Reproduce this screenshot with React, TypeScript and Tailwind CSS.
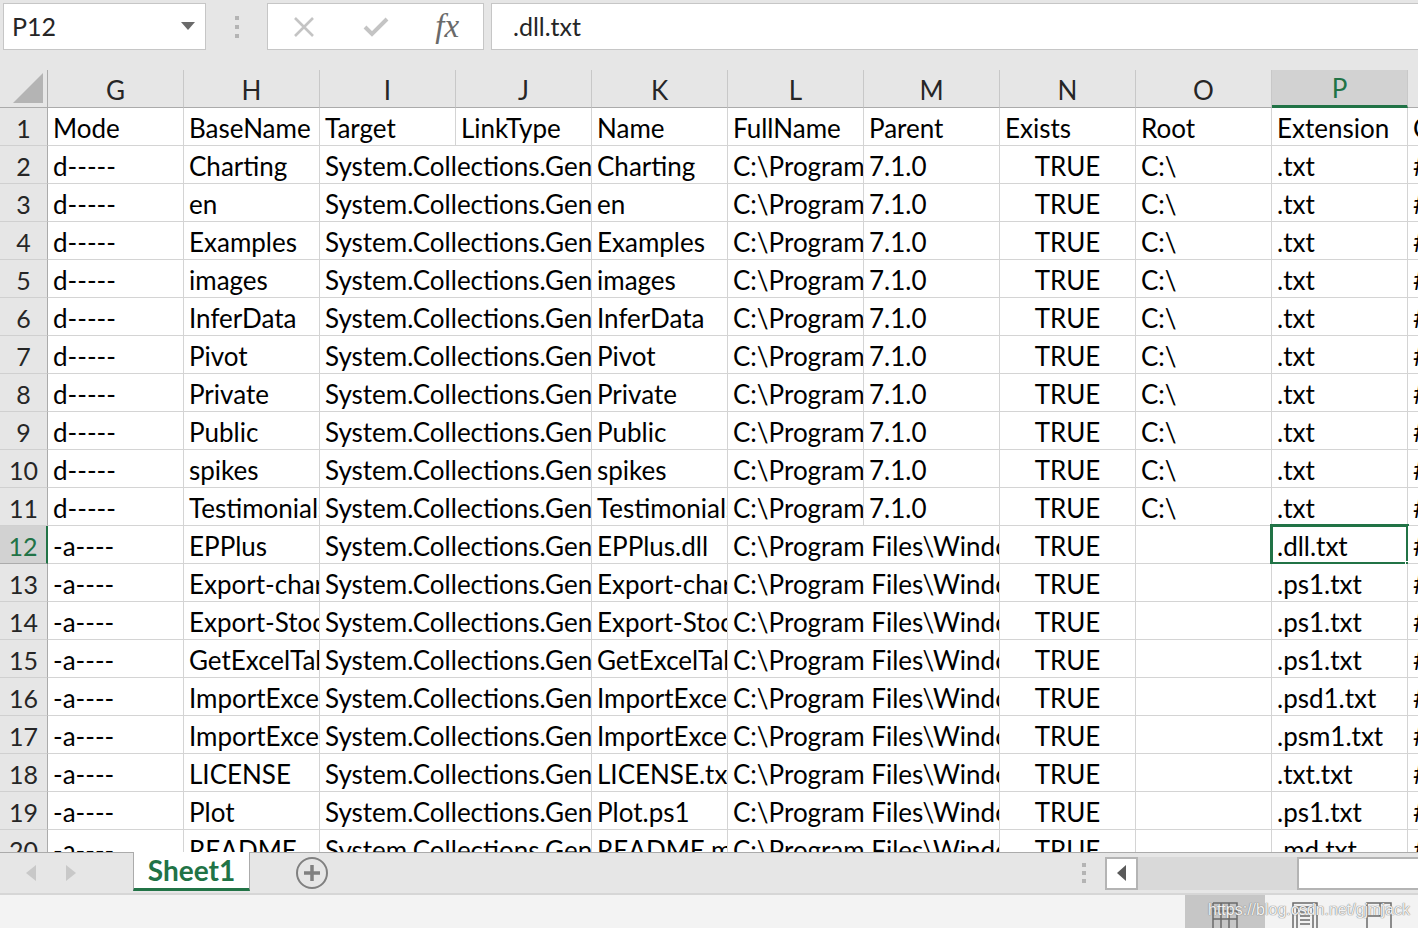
import React from 'react';

type Cell = { t?: string; c?: boolean; span?: number };

const GEN = 'System.Collections.Generic.List`1[System.String]';
const BASE = 'C:\\Program Files\\WindowsPowerShell\\Modules\\ImportExcel\\7.1.0\\';

const dirs = ['Charting', 'en', 'Examples', 'images', 'InferData', 'Pivot', 'Private', 'Public', 'spikes', 'Testimonials'];
const files: [string, string, string][] = [
  ['EPPlus', 'EPPlus.dll', '.dll.txt'],
  ['Export-charts', 'Export-charts.ps1', '.ps1.txt'],
  ['Export-StocksToExcel', 'Export-StocksToExcel.ps1', '.ps1.txt'],
  ['GetExcelTable', 'GetExcelTable.ps1', '.ps1.txt'],
  ['ImportExcel', 'ImportExcel.psd1', '.psd1.txt'],
  ['ImportExcel', 'ImportExcel.psm1', '.psm1.txt'],
  ['LICENSE', 'LICENSE.txt', '.txt.txt'],
  ['Plot', 'Plot.ps1', '.ps1.txt'],
  ['README', 'README.md', '.md.txt'],
];

const rows: Cell[][] = [
  [
    { t: 'Mode' }, { t: 'BaseName' }, { t: 'Target' }, { t: 'LinkType' }, { t: 'Name' },
    { t: 'FullName' }, { t: 'Parent' }, { t: 'Exists' }, { t: 'Root' }, { t: 'Extension' }, { t: 'CreationTime' },
  ],
  ...dirs.map((d) => [
    { t: 'd-----' }, { t: d }, { t: GEN, span: 2 }, { t: d },
    { t: BASE + d }, { t: '7.1.0' }, { t: 'TRUE', c: true }, { t: 'C:\\' }, { t: '.txt' }, { t: '########' },
  ]),
  ...files.map(([b, n, e]) => [
    { t: '-a----' }, { t: b }, { t: GEN, span: 2 }, { t: n },
    { t: BASE + n, span: 2 }, { t: 'TRUE', c: true }, { t: '' }, { t: e }, { t: '########' },
  ]),
];

const COLS = ['G', 'H', 'I', 'J', 'K', 'L', 'M', 'N', 'O', 'P', 'Q'];
const FONT = "font-['Lato',sans-serif]";

function GridRow({ n, cells }: { n: number; cells: Cell[] }) {
  const sel = n === 12;
  let colIdx = 0;
  return (
    <div className="flex h-[38px] shrink-0">
      <div
        className={`w-[48px] shrink-0 flex items-end justify-center pb-[4px] text-[25px] leading-none border-b ${
          sel
            ? 'bg-[#d2d2d2] text-[#217346] border-r-2 border-r-[#217346] border-b-[#ababab]'
            : 'bg-[#e6e6e6] text-[#262626] border-r border-r-[#ababab] border-b-[#d0d0d0]'
        }`}
      >
        {n}
      </div>
      {cells.map((cell, i) => {
        const col = COLS[colIdx];
        colIdx += cell.span ?? 1;
        const isSel = sel && col === 'P';
        return (
          <div
            key={i}
            className={`relative h-full shrink-0 border-r border-b border-[#d4d4d4] bg-white ${
              cell.span === 2 ? 'w-[272px]' : 'w-[136px]'
            }`}
          >
            <div
              className={`h-full overflow-hidden whitespace-nowrap flex items-end pb-[4px] px-[5px] text-[26px] leading-none text-black ${
                cell.c ? 'justify-center' : 'justify-start'
              }`}
            >
              {cell.t}
            </div>
            {isSel && (
              <>
                <div className="absolute left-[-2px] top-[-2px] right-[-2px] bottom-[-2px] border-[3px] border-[#217346]" />
                <div className="absolute right-[-6px] bottom-[-6px] w-[8px] h-[8px] bg-[#217346] border border-white" />
              </>
            )}
          </div>
        );
      })}
    </div>
  );
}

export default function App() {
  return (
    <div className={`w-[1418px] h-[928px] overflow-hidden flex flex-col bg-[#e6e6e6] ${FONT}`}>
      {/* Formula bar */}
      <div className="h-[70px] shrink-0 flex items-start pt-[3px] pl-[3px] bg-[#e6e6e6]">
        <div className="w-[203px] h-[47px] bg-white border border-[#c6c6c6] flex items-center justify-between pl-[8px] pr-[10px]">
          <span className="text-[25px] text-[#262626] leading-none">P12</span>
          <svg width="14" height="9" viewBox="0 0 14 9">
            <path d="M0 0 L14 0 L7 8 Z" fill="#6a6a6a" />
          </svg>
        </div>
        <div className="w-[61px] h-[47px] flex flex-col items-center justify-center gap-[5px]">
          <div className="w-[4px] h-[4px] bg-[#b4b4b4]" />
          <div className="w-[4px] h-[4px] bg-[#b4b4b4]" />
          <div className="w-[4px] h-[4px] bg-[#b4b4b4]" />
        </div>
        <div className="w-[217px] h-[47px] bg-white border border-[#c6c6c6] flex items-center">
          <div className="w-[72px] flex justify-center">
            <svg width="22" height="22" viewBox="0 0 22 22">
              <path d="M2 2 L20 20 M20 2 L2 20" stroke="#c4c4c4" strokeWidth="2.6" />
            </svg>
          </div>
          <div className="w-[72px] flex justify-center">
            <svg width="26" height="22" viewBox="0 0 26 22">
              <path d="M2 11 L9 18 L24 3" stroke="#c4c4c4" strokeWidth="4" fill="none" />
            </svg>
          </div>
          <div className="w-[72px] flex justify-center">
            <span className="font-['Liberation_Serif',serif] italic text-[33px] leading-none text-[#6a6a6a]">fx</span>
          </div>
        </div>
        <div className="ml-[7px] flex-1 h-[47px] bg-white border border-[#c6c6c6] border-r-0 flex items-center pl-[21px]">
          <span className="text-[25px] text-[#262626] leading-none">.dll.txt</span>
        </div>
      </div>

      {/* Grid */}
      <div className="h-[782px] shrink-0 overflow-hidden flex flex-col">
        {/* column header */}
        <div className="flex h-[38px] shrink-0 bg-[#e6e6e6]">
          <div className="w-[48px] shrink-0 border-r border-b border-[#ababab] flex items-end justify-end p-[4px]">
            <svg width="30" height="30" viewBox="0 0 30 30">
              <path d="M30 0 L30 30 L0 30 Z" fill="#b4b4b4" />
            </svg>
          </div>
          {COLS.map((c) => (
            <div
              key={c}
              className={`w-[136px] shrink-0 flex items-end justify-center pb-[4px] text-[26px] leading-none border-r border-r-[#c8c8c8] ${
                c === 'P'
                  ? 'bg-[#d2d2d2] text-[#217346] border-b-[3px] border-b-[#217346]'
                  : 'text-[#262626] border-b border-b-[#ababab]'
              }`}
            >
              {c}
            </div>
          ))}
        </div>
        {rows.map((r, i) => (
          <GridRow key={i} n={i + 1} cells={r} />
        ))}
      </div>

      {/* Sheet tabs bar */}
      <div className="h-[41px] shrink-0 flex items-stretch bg-[#e6e6e6] border-t border-[#ababab]">
        <div className="w-[133px] shrink-0 flex items-center pl-[26px] gap-[30px]">
          <svg width="10" height="16" viewBox="0 0 10 16">
            <path d="M10 0 L10 16 L0 8 Z" fill="#c8c8c8" />
          </svg>
          <svg width="10" height="16" viewBox="0 0 10 16">
            <path d="M0 0 L0 16 L10 8 Z" fill="#c8c8c8" />
          </svg>
        </div>
        <div className="w-[117px] shrink-0 bg-white border-x border-[#ababab] border-b-[3px] border-b-[#217346] mt-[-1px] mb-[2px] flex items-center justify-center">
          <span className="text-[28px] font-bold text-[#217346] leading-none">Sheet1</span>
        </div>
        <div className="w-[124px] shrink-0 flex items-center justify-center">
          <svg width="34" height="34" viewBox="0 0 34 34">
            <circle cx="17" cy="17" r="15" stroke="#808080" strokeWidth="2" fill="none" />
            <path d="M17 9 L17 25 M9 17 L25 17" stroke="#808080" strokeWidth="3.5" />
          </svg>
        </div>
        <div className="flex-1" />
        <div className="w-[44px] shrink-0 flex flex-col items-center justify-center gap-[4px] mr-[-1px]">
          <div className="w-[4px] h-[4px] bg-[#b4b4b4]" />
          <div className="w-[4px] h-[4px] bg-[#b4b4b4]" />
          <div className="w-[4px] h-[4px] bg-[#b4b4b4]" />
        </div>
        <div className="w-[313px] shrink-0 flex items-center py-[3px]">
          <div className="w-[33px] h-[33px] bg-white border-2 border-[#b4b4b4] flex items-center justify-center">
            <svg width="9" height="16" viewBox="0 0 9 16">
              <path d="M9 0 L9 16 L0 8 Z" fill="#5a5a5a" />
            </svg>
          </div>
          <div className="w-[159px] h-[33px] bg-[#d9d9d9]" />
          <div className="flex-1 h-[33px] bg-white border-2 border-[#b4b4b4] border-r-0" />
        </div>
      </div>

      {/* Status bar */}
      <div className="relative flex-1 bg-[#f3f3f3] border-t-2 border-[#d6d6d6] flex items-stretch">
        <div className="flex-1" />
        <div className="w-[80px] bg-[#c6c6c6] flex items-end justify-center">
          <svg width="26" height="26" viewBox="0 0 26 26">
            <path d="M1 1 H25 V26 M1 1 V26 M1 9 H25 M1 17 H25 M9 1 V26 M17 1 V26" stroke="#6b6b6b" strokeWidth="1.5" fill="none" />
          </svg>
        </div>
        <div className="w-[80px] flex items-end justify-center">
          <svg width="26" height="26" viewBox="0 0 26 26">
            <path d="M1 26 V1 H25 V26 M5 26 V5 H21 V26 M8 10 H18 M8 14 H18 M8 18 H18 M8 22 H18" stroke="#6b6b6b" strokeWidth="1.5" fill="none" />
          </svg>
        </div>
        <div className="w-[73px] flex items-end justify-center pr-[6px]">
          <svg width="26" height="26" viewBox="0 0 26 26">
            <path d="M1 26 V1 H25 V26 M1 14 H14 V1" stroke="#6b6b6b" strokeWidth="1.5" fill="none" />
          </svg>
        </div>
        <div className="absolute left-[1208px] top-[7px] font-['Liberation_Sans',sans-serif] text-[16px] leading-none text-white/90 [text-shadow:0_0_1px_#777,0_0_1px_#777]">
          https://blog.csdn.net/gjmjack
        </div>
      </div>
    </div>
  );
}
